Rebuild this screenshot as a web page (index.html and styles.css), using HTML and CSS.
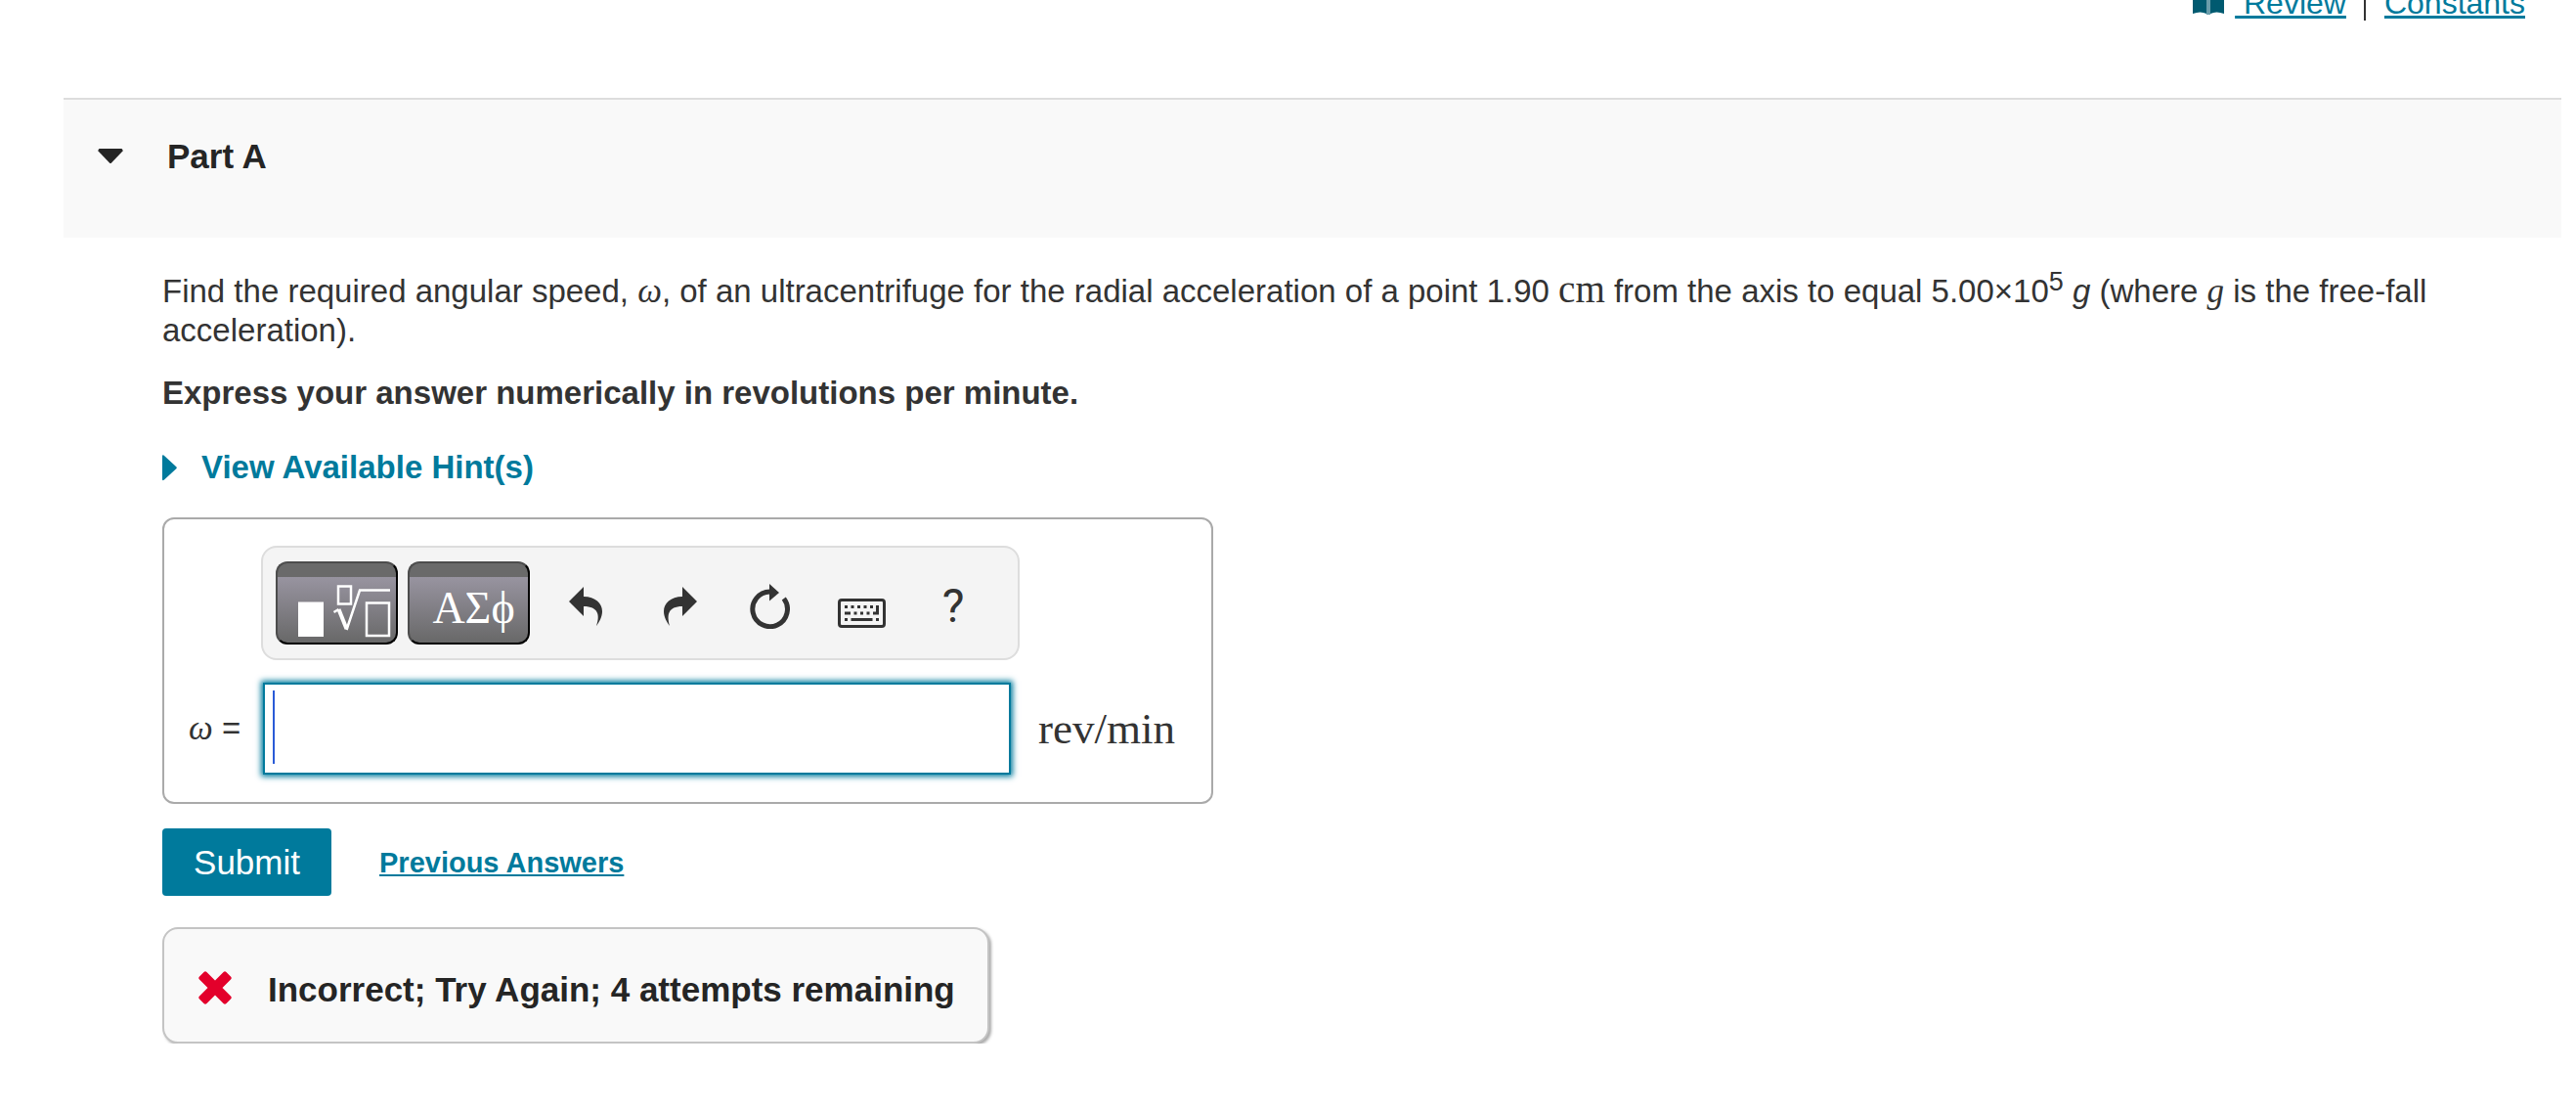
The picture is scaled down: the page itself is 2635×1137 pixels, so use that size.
FILE: index.html
```
<!DOCTYPE html>
<html lang="en">
<head>
    <meta charset="UTF-8">
    <meta name="viewport" content="width=device-width, initial-scale=1.0">
    <title>Part A</title>
    <link rel="stylesheet" href="styles.css">
</head>
<body>
    <nav class="resources">
        <svg class="book-icon" viewBox="0 0 32 32" aria-hidden="true">
            <path d="M0 3Q9 0 14 3V31Q8 28 0 31ZM18 3Q24 0 32 3V31Q24 28 18 31Z" fill="#005a70"/>
            <path d="M14 3h4v29h-4z" fill="#6a9dab"/>
        </svg>
        <a href="#review">&nbsp;Review</a>
        <span class="divider"></span>
        <a href="#constants">Constants</a>
    </nav>

    <main class="part">
        <header class="part-header">
            <button class="toggle" type="button" aria-label="Collapse Part A">
                <svg width="26" height="16" viewBox="0 0 26 16"><path d="M1.500 0H24.500Q26 1 25.500 2.500L14 14.500Q13 15.500 12 14.500L.5 2.500Q0 1 1.500 0Z" fill="#252525"/></svg>
            </button>
            <h2>Part A</h2>
        </header>

        <div class="part-body">
            <p class="prompt">Find the required angular speed, <i class="math">ω</i>, of an ultracentrifuge for the radial acceleration of a point 1.90 <span class="math unit">cm</span> from the axis to equal 5.00×10<sup>5</sup> <i>g</i> (where <i class="math">g</i> is the free-fall acceleration).</p>
            <p class="instructions">Express your answer numerically in revolutions per minute.</p>
            <button class="hints" type="button">
                <svg width="15" height="30" viewBox="0 0 15 30"><path d="M0 3.500Q0 1.500 1.500 2.500L14 14Q15.500 15 14 16.500L2 27.500Q0 29 0 27Z" fill="#007a9c"/></svg>
                View Available Hint(s)
            </button>

            <form id="answer-form" class="answer-box">
                <div class="toolbar">
                    <button class="palette" type="button" aria-label="Templates">
                        <svg width="121" height="81" viewBox="284 574 121 81" fill="none" stroke="#fff">
                            <path d="M305 613.500h26v35.500h-26z" fill="#fff" stroke="none"/>
                            <path d="M346 597.500h13v18h-13zM375 614.500h23v33.500h-23z" stroke-width="2.500"/>
                            <path d="M341.500 624l5-3" stroke-width="2.500"/>
                            <path d="M346.500 621l8 20" stroke-width="4"/>
                            <path d="M354.500 642l13.500-40.500h31" stroke-width="2.500"/>
                        </svg>
                    </button>
                    <button class="palette symbols" type="button" aria-label="Symbols">ΑΣϕ</button>
                    <button class="tool" type="button" aria-label="Undo">
                        <svg width="34" height="40" viewBox="0 0 34 40"><path d="M0 15L15 0V10C27 10 34 17 34 25C34 31 31 36 28 40C32 29 30 20 15 20V30Z"/></svg>
                    </button>
                    <button class="tool" type="button" aria-label="Redo">
                        <svg width="40" height="40" viewBox="-6 0 40 40"><path d="M34 15L19 0V10C7 10 0 17 0 25C0 31 3 36 6 40C3 29 4 20 19 20V30Z"/></svg>
                    </button>
                    <button class="tool" type="button" aria-label="Reset">
                        <svg width="41" height="46" viewBox="0 0 41 46"><path d="M20.500 8A17.800 17.800 0 1 0 34.800 15" fill="none" stroke="#333" stroke-width="5"/><path d="M20 0L30 9L20 17.500Z"/></svg>
                    </button>
                    <button class="tool keyboard" type="button" aria-label="Keyboard shortcuts">
                        <svg width="49" height="30" viewBox="0 0 49 30">
                            <rect x="1.500" y="1.500" width="46" height="27" rx="2.500" fill="none" stroke="#333" stroke-width="3"/>
                            <path d="M7 7h3v3h-3zM13.500 7h3v3h-3zM20 7h3v3h-3zM26.500 7h3v3h-3zM33 7h3v3h-3zM39 7h3v9.500h-6v-3h3zM7 13.500h6v3h-6zM16.500 13.500h3v3h-3zM23 13.500h3v3h-3zM29.500 13.500h3v3h-3zM7 20h3v3h-3zM13.500 20h22v3h-22zM39 20h3v3h-3z"/>
                        </svg>
                    </button>
                    <button class="tool help" type="button" aria-label="Help">?</button>
                </div>
                <label class="variable" for="answer"><i class="math">ω</i> =</label>
                <div class="field">
                    <input id="answer" type="text" autocomplete="off">
                    <span class="caret"></span>
                </div>
                <span class="units">rev/min</span>
            </form>

            <div class="actions">
                <button class="submit" type="submit" form="answer-form">Submit</button>
                <a href="#previous">Previous Answers</a>
            </div>

            <div class="feedback" role="status">
                <svg width="34" height="34" viewBox="0 0 34 34"><path d="M5.500 1Q7 -.5 8.500 1L17 9.500L25.500 1Q27 -.5 28.500 1L33 5.500Q34.500 7 33 8.500L24.500 17L33 25.500Q34.500 27 33 28.500L28.500 33Q27 34.500 25.500 33L17 24.500L8.500 33Q7 34.500 5.500 33L1 28.500Q-.5 27 1 25.500L9.500 17L1 8.500Q-.5 7 1 5.500Z" fill="#e3002b"/></svg>
                <strong>Incorrect; Try Again; 4 attempts remaining</strong>
            </div>
        </div>
    </main>
</body>
</html>
```
FILE: styles.css
```
* {
    box-sizing: border-box;
}
body {
    margin: 0;
    font-family: "Liberation Sans", Arial, sans-serif;
    font-size: 33px;
    line-height: 40px;
    color: #333;
    background-color: #fff;
    overflow: hidden;
}
button {
    font-family: inherit;
    padding: 0;
    border: none;
    background: none;
    cursor: pointer;
}
svg {
    display: block;
    flex: none;
}
a {
    color: #007a9c;
    text-underline-offset: 2px;
    text-decoration-thickness: 3px;
}
/* resource links, partly scrolled out at the top */
.resources {
    display: flex;
    justify-content: flex-end;
    margin-top: -17px;
    margin-bottom: 77px;
    padding-right: 52px;
    font-size: 32px;
}
.book-icon {
    width: 32px;
    height: 32px;
    margin-right: 11px;
}
.divider {
    width: 2px;
    height: 38px;
    margin: 0 19px 0 18px;
    background-color: #333;
}
.part {
    margin: 0 15px 0 65px;
}
.part-header {
    display: flex;
    align-items: flex-start;
    height: 143px;
    padding: 38px 35px;
    border-top: 2px solid #ddd;
    background-color: #f9f9f9;
}
.toggle {
    padding-top: 12px;
}
h2 {
    margin: 0 0 0 45px;
    font-size: 35px;
    color: #252525;
}
.part-body {
    padding: 35px 101px 0;
}
p {
    margin: 0 0 24px;
}
.math {
    font-family: "Liberation Serif", "Times New Roman", serif;
    font-size: 35px;
    line-height: 0;
}
.unit {
    font-size: 39px;
}
sup {
    font-size: 27px;
    line-height: 0;
}
.instructions {
    margin-bottom: 36px;
    font-weight: bold;
}
.hints {
    display: flex;
    align-items: center;
    gap: 25px;
    margin-bottom: 31px;
    font-size: 33px;
    font-weight: bold;
    line-height: 40px;
    color: #007a9c;
}
.answer-box {
    display: grid;
    grid-template-columns: 76px auto auto;
    align-items: center;
    width: fit-content;
    padding: 27px 37px 28px 25px;
    border: 2px solid #aaa;
    border-radius: 12px;
}
.toolbar {
    grid-column: 2 / 4;
    justify-self: start;
    display: flex;
    align-items: center;
    width: 776px;
    height: 117px;
    margin-left: -2px;
    padding: 0 13px;
    border: 2px solid #ddd;
    border-radius: 16px;
    background-color: #f4f4f4;
}
.palette {
    width: 125px;
    height: 85px;
    margin-right: 10px;
    border: 2px solid;
    border-color: #4d4d4d #000 #000 #4d4d4d;
    border-radius: 12px;
    background: linear-gradient(#6a6a6a 14px, #9894a0 14px, #686868);
    overflow: hidden;
}
.symbols {
    padding: 10px 0 0 10px;
    font-family: "Liberation Serif", serif;
    font-size: 46px;
    color: #fff;
}
.tool {
    display: flex;
    justify-content: center;
    align-items: center;
    width: 94px;
    height: 85px;
    padding-top: 6px;
    fill: #333;
}
.keyboard {
    padding-top: 20px;
}
.help {
    font-family: Roboto, sans-serif;
    font-size: 48px;
    color: #333;
}
.field {
    position: relative;
    margin-top: 23px;
}
.field input {
    display: block;
    width: 765px;
    height: 94px;
    padding: 0 8px;
    border: 2px solid #007a9c;
    outline: none;
    box-shadow: 0 0 6px 2px #007a9c;
    font-size: 35px;
}
.caret {
    position: absolute;
    left: 10px;
    top: 8px;
    width: 2px;
    height: 75px;
    background-color: #2a5bd7;
}
.variable, .units {
    padding-top: 22px;
}
.units {
    margin-left: 28px;
    font-family: "Liberation Serif", "Times New Roman", serif;
    font-size: 45px;
}
.actions {
    display: flex;
    align-items: center;
    gap: 49px;
    margin: 25px 0 32px;
}
.submit {
    width: 173px;
    height: 69px;
    border-radius: 4px;
    background-color: #007a9c;
    color: #fff;
    font-size: 35px;
}
.actions a {
    font-size: 29px;
    font-weight: bold;
    text-decoration-thickness: 2px;
}
.feedback {
    display: flex;
    align-items: center;
    gap: 37px;
    width: fit-content;
    height: 119px;
    padding: 8px 33px 0 35px;
    border: 2px solid #c4c4c4;
    border-radius: 16px;
    background-color: #f9f9f9;
    box-shadow: 2px 2px 3px #aaa;
    color: #252525;
    font-size: 35px;
}
.feedback svg {
    margin-bottom: 4px;
}
```
